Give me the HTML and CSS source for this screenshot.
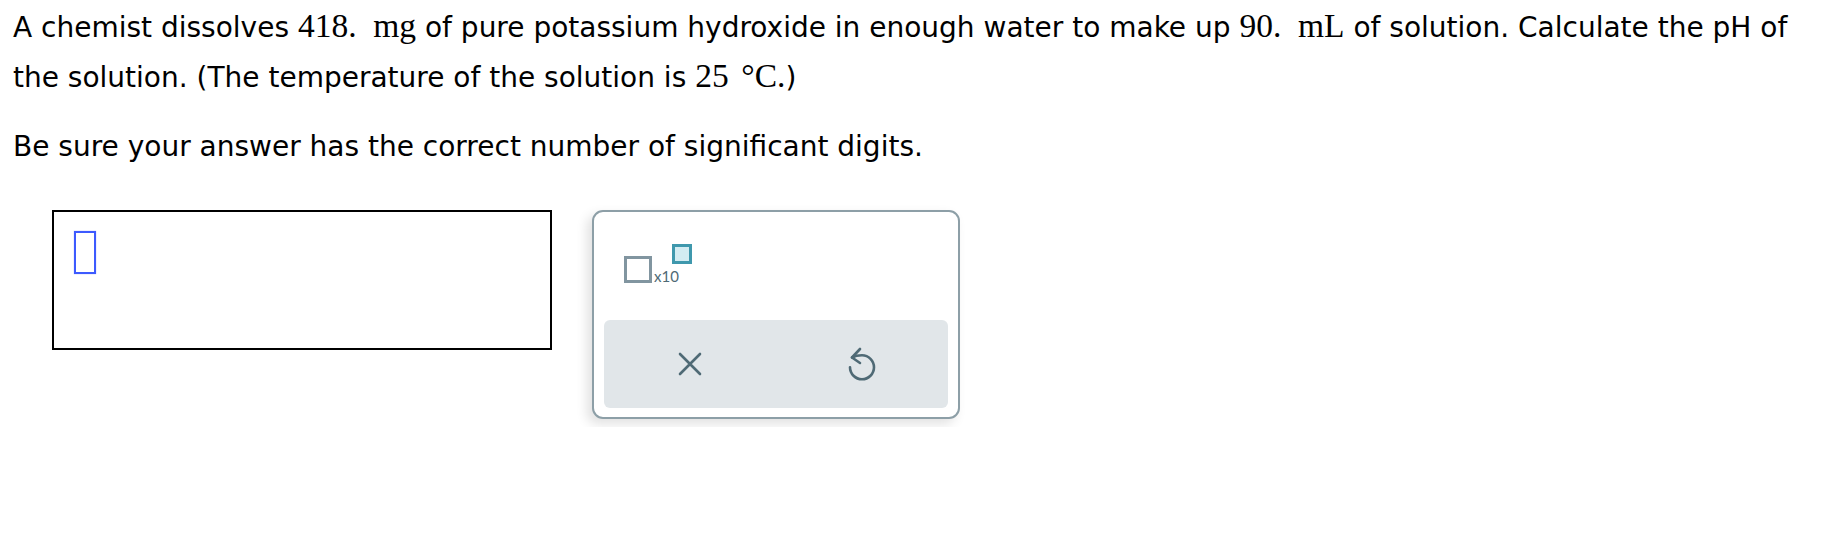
FILE: index.html
```html
<!DOCTYPE html>
<html lang="en">
<head>
<meta charset="utf-8">
<title>Question</title>
<link rel="stylesheet" href="styles.css">
</head>
<body>
<div class="page">
  <p class="q">A chemist dissolves <span class="m">418.<span class="u">mg</span></span> of pure potassium hydroxide in enough water to make up <span class="m">90.<span class="u">mL</span></span> of solution. Calculate the pH of the solution. (The temperature of the solution is <span class="m">25<span class="u deg">&#176;C</span>.</span>)</p>
  <p class="note">Be sure your answer has the correct number of significant digits.</p>
  <div class="answer-row">
    <div class="answer-box"><span class="cursor"></span></div>
    <div class="panel">
      <div class="panel-top">
        <div class="sci">
          <span class="base"></span>
          <span class="x10">x10</span>
          <span class="exp"></span>
        </div>
      </div>
      <div class="actions">
        <button class="act" type="button" aria-label="Clear">
          <svg width="24" height="24" viewBox="0 0 24 24"><path d="M2 2 L22 22 M22 2 L2 22" fill="none" stroke="#4f6a75" stroke-width="2.6" stroke-linecap="round"/></svg>
        </button>
        <button class="act" type="button" aria-label="Undo">
          <svg width="32" height="36" viewBox="0 0 32 36"><path d="M6 11.5 C 9 9.8, 12.5 9.3, 16 9.3 A12 12 0 1 1 4 21.3" fill="none" stroke="#4f6a75" stroke-width="2.6" stroke-linecap="round"/><path d="M14 3 L6 11.5 L14 17" fill="none" stroke="#4f6a75" stroke-width="2.6" stroke-linecap="round" stroke-linejoin="round"/></svg>
        </button>
      </div>
    </div>
  </div>
</div>
</body>
</html>
```
FILE: styles.css
```css
html, body {
  margin: 0;
  padding: 0;
  background: #ffffff;
}
body {
  font-family: "DejaVu Sans", Verdana, sans-serif;
  font-size: 28px;
  color: #000000;
}
.page {
  padding: 3px 13px 8px 13px;
}
.q {
  margin: 0;
  line-height: 50px;
}
.m {
  font-family: "Liberation Serif", "Times New Roman", serif;
  font-size: 33.5px;
  line-height: 1;
}
.u {
  margin-left: 0.5em;
}
.u.deg {
  margin-left: 0.38em;
}
.note {
  margin: 19px 0 0 0;
  line-height: 50px;
}
.answer-row {
  display: flex;
  align-items: flex-start;
  gap: 40px;
  margin: 38px 0 0 39px;
}
.answer-box {
  width: 500px;
  height: 140px;
  box-sizing: border-box;
  border: 2px solid #000000;
  padding: 19px 20px;
}
.cursor {
  display: block;
  width: 22px;
  height: 43px;
  box-sizing: border-box;
  border: 2px solid #3d5afe;
  box-shadow: 0 0 1px rgba(61, 90, 254, 0.5);
}
.panel {
  width: 368px;
  height: 209px;
  box-sizing: border-box;
  border: 2px solid #8d9fa7;
  border-radius: 11px;
  padding: 0 10px 9px 10px;
  display: flex;
  flex-direction: column;
  box-shadow: -5px 5px 12px rgba(0, 0, 0, 0.12);
  background: #ffffff;
}
.panel-top {
  height: 108px;
}
.sci {
  display: flex;
  align-items: flex-end;
  height: 39px;
  margin: 32px 0 0 20px;
}
.base {
  width: 28px;
  height: 27px;
  box-sizing: border-box;
  border: 3px solid #8195a0;
}
.x10 {
  font-family: Lato, "Open Sans", sans-serif;
  font-size: 15px;
  line-height: 15px;
  color: #4f6a75;
  margin-left: 2px;
  margin-bottom: -1px;
}
.exp {
  align-self: flex-start;
  width: 20px;
  height: 20px;
  box-sizing: border-box;
  border: 3px solid #3f98ad;
  background: #d3ecf2;
  margin-left: -7px;
}
.actions {
  height: 88px;
  background: #e1e6e9;
  border-radius: 6px;
  display: flex;
}
.act {
  flex: 1;
  border: 0;
  background: transparent;
  padding: 0;
  margin: 0;
  display: flex;
  align-items: center;
  justify-content: center;
}
.act svg {
  display: block;
}
```
